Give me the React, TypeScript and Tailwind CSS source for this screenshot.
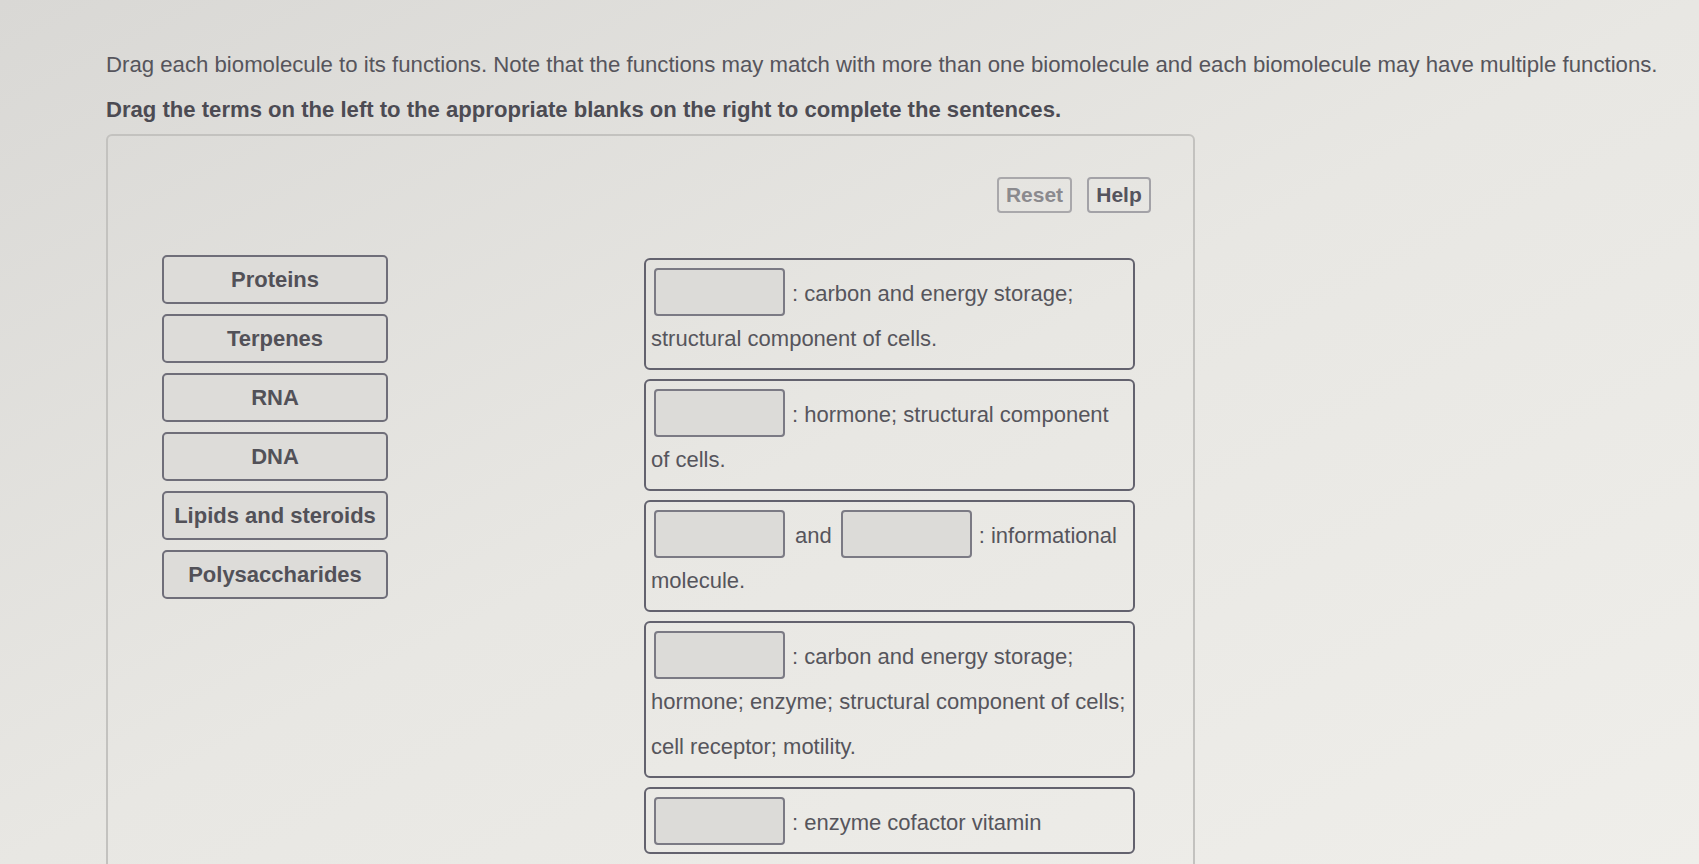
const terms = ['Proteins', 'Terpenes', 'RNA', 'DNA', 'Lipids and steroids', 'Polysaccharides']

// null marks an empty drop target in the first line of a sentence
type Part = string | null

const sentences: { head: Part[]; tail: string[] }[] = [
  { head: [null, ': carbon and energy storage;'], tail: ['structural component of cells.'] },
  { head: [null, ': hormone; structural component'], tail: ['of cells.'] },
  { head: [null, 'and', null, ': informational'], tail: ['molecule.'] },
  {
    head: [null, ': carbon and energy storage;'],
    tail: ['hormone; enzyme; structural component of cells;', 'cell receptor; motility.'],
  },
  { head: [null, ': enzyme cofactor vitamin'], tail: [] },
]

function Blank() {
  return <span className="block h-[48px] w-[131px] shrink-0 rounded-[4px] border-2 border-[#7b7a84] bg-[#dcdbd8]" />
}

export default function App() {
  return (
    <div className="h-screen overflow-hidden bg-linear-to-br from-[#d9d8d5] via-[#e8e7e3] to-[#efeeea] font-['Liberation_Sans',Arial,sans-serif] text-[#56555c]">
      <div className="pl-[106px] pt-[52px]">
        <p className="whitespace-nowrap text-[22.2px] leading-[26px]">
          Drag each biomolecule to its functions. Note that the functions may match with more than one biomolecule and each
          biomolecule may have multiple functions.
        </p>
        <p className="mt-[19px] whitespace-nowrap text-[22.1px] font-bold leading-[26px] text-[#4c4b53]">
          Drag the terms on the left to the appropriate blanks on the right to complete the sentences.
        </p>

        <div className="mt-[11px] h-[760px] w-[1089px] rounded-md border-2 border-[#c3c2bf]">
          <div className="flex justify-end gap-[15px] pr-[42px] pt-[41px]">
            <button className="flex h-[36px] w-[75px] items-center justify-center rounded-[4px] border-2 border-[#a9a8ab] text-[21px] font-bold text-[#8b8a8e]">
              Reset
            </button>
            <button className="flex h-[36px] w-[64px] items-center justify-center rounded-[4px] border-2 border-[#a3a2a7] text-[21px] font-bold text-[#55545e]">
              Help
            </button>
          </div>

          <div className="mt-[42px] flex pl-[54px]">
            <div className="flex w-[226px] flex-col gap-[10px]">
              {terms.map((t) => (
                <div
                  key={t}
                  className="flex h-[49px] items-center justify-center rounded-[5px] border-2 border-[#6f6e79] bg-[#dddcd9] text-[22px] font-bold text-[#525158]"
                >
                  {t}
                </div>
              ))}
            </div>

            <div className="ml-[256px] mt-[3px] flex w-[491px] flex-col gap-[9px]">
              {sentences.map((s, i) => (
                <div key={i} className="rounded-[6px] border-2 border-[#63626e] px-[8px] pb-[7px] pt-[8px] text-[22px]">
                  <div className="flex h-[48px] items-center">
                    {s.head.map((p, j) =>
                      p === null ? (
                        <span key={j} className={j > 0 ? 'ml-[9px]' : ''}>
                          <Blank />
                        </span>
                      ) : (
                        <span
                          key={j}
                          className={`mt-[3px] whitespace-nowrap leading-none ${p === 'and' ? 'ml-[10px]' : 'ml-[7px]'}`}
                        >
                          {p}
                        </span>
                      ),
                    )}
                  </div>
                  {s.tail.map((line) => (
                    <p key={line} className="-ml-[3px] mt-[1px] whitespace-nowrap leading-[44px]">
                      {line}
                    </p>
                  ))}
                </div>
              ))}
            </div>
          </div>
        </div>
      </div>
    </div>
  )
}
